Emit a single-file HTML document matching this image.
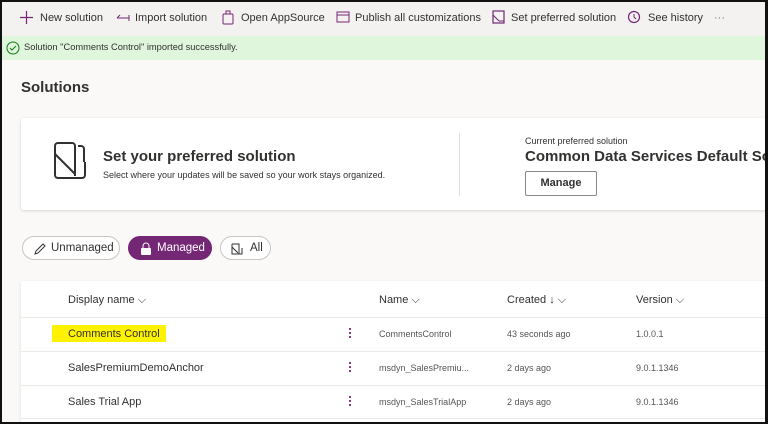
<!DOCTYPE html>
<html><head><style>
*{margin:0;padding:0;box-sizing:border-box}
body{width:768px;height:424px;overflow:hidden;background:#faf9f8;font-family:"Liberation Sans",sans-serif;color:#323130;position:relative}
.clip{position:absolute;left:0;top:0;width:768px;height:424px;overflow:hidden}
.frame{position:absolute;inset:0;border:2px solid #111;border-right-width:3px;z-index:10;pointer-events:none}
.tb{position:absolute;left:0;top:0;width:768px;height:36px;background:#f3f2f1;font-size:11px}
.tb span{position:absolute;top:12px;white-space:nowrap}
.tb svg{position:absolute}
.ok{position:absolute;left:0;top:36px;width:768px;height:24px;background:#dff6dd;font-size:9.3px}
.a{position:absolute;white-space:nowrap}
.card{position:absolute;left:21px;top:118px;width:747px;height:92px;background:#fff;box-shadow:0 1px 3px rgba(0,0,0,.15);border-radius:3px 0 0 3px;overflow:hidden}
.pill{position:absolute;top:236px;height:24px;border:1px solid #c8c6c4;border-radius:12px;background:#fff;font-size:11.5px}
.tbl{position:absolute;left:21px;top:281px;width:747px;height:150px;background:#fff;box-shadow:0 1px 3px rgba(0,0,0,.12)}
.ln{position:absolute;left:21px;width:747px;height:1px;background:#edebe9}
.dots{position:absolute;left:349px;width:2px;font-size:0}
.dots i{display:block;width:2px;height:2px;background:#8a3a8a;margin-bottom:2px}
</style></head><body>
<div class="clip">
<div class="tb">
<svg style="left:20px;top:11px" width="13" height="13"><path d="M6.5 0v13M0 6.5h13" stroke="#742774" stroke-width="1.2"/></svg>
<span style="left:40px">New solution</span>
<svg style="left:116px;top:13px" width="14" height="10"><path d="M1 5h12M13 2v6M1 5l3-3" stroke="#742774" stroke-width="1" fill="none"/></svg>
<span style="left:135px">Import solution</span>
<svg style="left:222px;top:10px" width="12" height="15"><rect x="1" y="4" width="10" height="10" rx="1" fill="none" stroke="#742774"/><path d="M4 4V1h4v3" fill="none" stroke="#742774"/></svg>
<span style="left:241px">Open AppSource</span>
<svg style="left:336px;top:11px" width="14" height="13"><rect x="1" y="1" width="12" height="10" fill="none" stroke="#742774"/><path d="M1 4h12" stroke="#742774"/></svg>
<span style="left:355px">Publish all customizations</span>
<svg style="left:492px;top:10px" width="13" height="14"><rect x="1" y="1" width="11" height="12" fill="none" stroke="#742774" stroke-width="1.2"/><path d="M1 5l6 6h5" fill="none" stroke="#742774"/></svg>
<span style="left:511px">Set preferred solution</span>
<svg style="left:627px;top:10px" width="14" height="14"><circle cx="7" cy="7" r="5.5" fill="none" stroke="#742774" stroke-width="1.2"/><path d="M7 4v3l2 2" fill="none" stroke="#742774"/></svg>
<span style="left:648px">See history</span>
<span style="left:714px;color:#777">···</span>
</div>
<div class="ok">
<svg style="position:absolute;left:6px;top:5px" width="14" height="14"><circle cx="7" cy="7" r="6" fill="none" stroke="#107c10"/><path d="M4 7l2 2 4-4" fill="none" stroke="#107c10"/></svg>
<span class="a" style="left:24px;top:6px">Solution "Comments Control" imported successfully.</span>
</div>
<div class="a" style="left:21px;top:79px;font-size:15px;font-weight:bold">Solutions</div>
<div class="card">
<svg style="position:absolute;left:31px;top:24px" width="34" height="38"><path d="M3 4a3 3 0 0 1 3-3h14a3 3 0 0 1 3 3v30M3 4v29a3 3 0 0 0 3 3h24a3 3 0 0 0 3-3V20M3 12l20 20M26 4h3a3 3 0 0 1 3 3v13" fill="none" stroke="#323130" stroke-width="2"/></svg>
<div class="a" style="left:82px;top:30px;font-size:15px;font-weight:bold">Set your preferred solution</div>
<div class="a" style="left:82px;top:52px;font-size:9px">Select where your updates will be saved so your work stays organized.</div>
<div style="position:absolute;left:438px;top:15px;width:1px;height:63px;background:#e1dfdd"></div>
<div class="a" style="left:504px;top:18px;font-size:9px">Current preferred solution</div>
<div class="a" style="left:504px;top:30px;font-size:15px;font-weight:bold">Common Data Services Default Solution</div>
<div style="position:absolute;left:504px;top:53px;width:72px;height:25px;border:1px solid #8a8886;border-radius:2px;font-size:11px;font-weight:bold;text-align:center;line-height:23px">Manage</div>
</div>
<div class="pill" style="left:22px;width:98px"><svg style="position:absolute;left:11px;top:6px" width="12" height="12"><path d="M1 11l1-3 7-7 2 2-7 7z" fill="none" stroke="#323130"/></svg><span class="a" style="left:28px;top:5px">Unmanaged</span></div>
<div class="pill" style="left:128px;width:84px;background:#742774;border-color:#742774;color:#fff"><svg style="position:absolute;left:11px;top:5px" width="12" height="13"><path d="M3 6V4a3 3 0 0 1 6 0v2" fill="none" stroke="#fff"/><rect x="1" y="6" width="10" height="7" rx="1" fill="#fff"/></svg><span class="a" style="left:28px;top:5px">Managed</span></div>
<div class="pill" style="left:220px;width:51px"><svg style="position:absolute;left:10px;top:5px" width="13" height="13"><path d="M1 2h7v10M1 2v10h10V6M1 5l6 6" fill="none" stroke="#323130"/></svg><span class="a" style="left:29px;top:5px">All</span></div>
<div class="tbl"></div>
<div class="ln" style="top:317px"></div><div class="ln" style="top:351px"></div><div class="ln" style="top:385px"></div><div class="ln" style="top:418px"></div>
<div class="a" style="left:68px;top:294px;font-size:11px">Display name ⌵</div>
<div class="a" style="left:379px;top:294px;font-size:11px">Name ⌵</div>
<div class="a" style="left:507px;top:294px;font-size:11px">Created ↓ ⌵</div>
<div class="a" style="left:636px;top:294px;font-size:11px">Version ⌵</div>
<div style="position:absolute;left:52px;top:325px;height:17px;background:#fff200;width:114px"></div>
<div class="a" style="left:68px;top:328px;font-size:11px">Comments Control</div>
<div class="a" style="left:68px;top:362px;font-size:11px">SalesPremiumDemoAnchor</div>
<div class="a" style="left:68px;top:396px;font-size:11px">Sales Trial App</div>
<div class="dots" style="top:328px"><i></i><i></i><i></i></div>
<div class="dots" style="top:362px"><i></i><i></i><i></i></div>
<div class="dots" style="top:396px"><i></i><i></i><i></i></div>
<div class="a" style="left:379px;top:329px;font-size:9px;color:#555">CommentsControl</div>
<div class="a" style="left:379px;top:363px;font-size:9px;color:#555">msdyn_SalesPremiu...</div>
<div class="a" style="left:379px;top:397px;font-size:9px;color:#555">msdyn_SalesTrialApp</div>
<div class="a" style="left:507px;top:329px;font-size:9px;color:#555">43 seconds ago</div>
<div class="a" style="left:507px;top:363px;font-size:9px;color:#555">2 days ago</div>
<div class="a" style="left:507px;top:397px;font-size:9px;color:#555">2 days ago</div>
<div class="a" style="left:636px;top:329px;font-size:9px;color:#555">1.0.0.1</div>
<div class="a" style="left:636px;top:363px;font-size:9px;color:#555">9.0.1.1346</div>
<div class="a" style="left:636px;top:397px;font-size:9px;color:#555">9.0.1.1346</div>
</div>
<div class="frame"></div>
</body></html>
